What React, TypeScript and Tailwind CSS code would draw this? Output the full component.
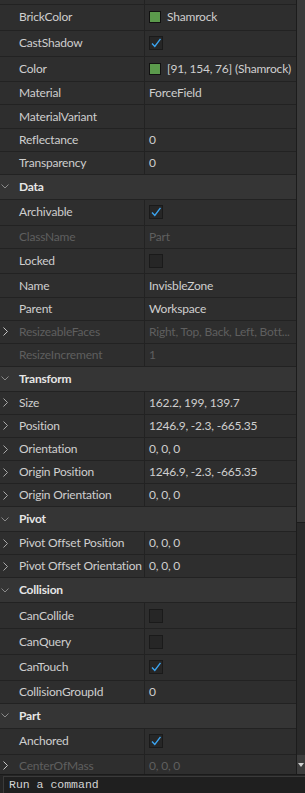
import React from 'react';

type Row =
  | { kind: 'header'; label: string }
  | {
      kind: 'prop';
      name: string;
      value?: string;
      check?: boolean;
      swatch?: boolean;
      expand?: boolean;
      disabled?: boolean;
    };

const rows: Row[] = [
  { kind: 'prop', name: 'BrickColor', value: 'Shamrock', swatch: true },
  { kind: 'prop', name: 'CastShadow', check: true },
  { kind: 'prop', name: 'Color', value: '[91, 154, 76] (Shamrock)', swatch: true },
  { kind: 'prop', name: 'Material', value: 'ForceField' },
  { kind: 'prop', name: 'MaterialVariant', value: '' },
  { kind: 'prop', name: 'Reflectance', value: '0' },
  { kind: 'prop', name: 'Transparency', value: '0' },
  { kind: 'header', label: 'Data' },
  { kind: 'prop', name: 'Archivable', check: true },
  { kind: 'prop', name: 'ClassName', value: 'Part', disabled: true },
  { kind: 'prop', name: 'Locked', check: false },
  { kind: 'prop', name: 'Name', value: 'InvisbleZone' },
  { kind: 'prop', name: 'Parent', value: 'Workspace' },
  { kind: 'prop', name: 'ResizeableFaces', value: 'Right, Top, Back, Left, Bott...', expand: true, disabled: true },
  { kind: 'prop', name: 'ResizeIncrement', value: '1', disabled: true },
  { kind: 'header', label: 'Transform' },
  { kind: 'prop', name: 'Size', value: '162.2, 199, 139.7', expand: true },
  { kind: 'prop', name: 'Position', value: '1246.9, -2.3, -665.35', expand: true },
  { kind: 'prop', name: 'Orientation', value: '0, 0, 0', expand: true },
  { kind: 'prop', name: 'Origin Position', value: '1246.9, -2.3, -665.35', expand: true },
  { kind: 'prop', name: 'Origin Orientation', value: '0, 0, 0', expand: true },
  { kind: 'header', label: 'Pivot' },
  { kind: 'prop', name: 'Pivot Offset Position', value: '0, 0, 0', expand: true },
  { kind: 'prop', name: 'Pivot Offset Orientation', value: '0, 0, 0', expand: true },
  { kind: 'header', label: 'Collision' },
  { kind: 'prop', name: 'CanCollide', check: false },
  { kind: 'prop', name: 'CanQuery', check: false },
  { kind: 'prop', name: 'CanTouch', check: true },
  { kind: 'prop', name: 'CollisionGroupId', value: '0' },
  { kind: 'header', label: 'Part' },
  { kind: 'prop', name: 'Anchored', check: true },
  { kind: 'prop', name: 'CenterOfMass', value: '0, 0, 0', expand: true, disabled: true },
];

function Checkbox({ on }: { on: boolean }) {
  return (
    <div className="w-[14px] h-[14px] border border-[#1a1a1a] bg-[#262626] flex items-center justify-center">
      {on && (
        <svg width="12" height="12" viewBox="0 0 12 12">
          <polyline points="2,6.5 4.8,9.5 10.5,1.8" fill="none" stroke="#3ba4f0" strokeWidth="1.4" />
        </svg>
      )}
    </div>
  );
}

export default function App() {
  return (
    <div className="w-[305px] h-[793px] flex flex-col bg-[#2e2e2e] overflow-hidden font-['Lato','Liberation_Sans',sans-serif] text-[12px] tracking-[-0.2px] text-[#cfcfcf]">
      <div className="flex-1 flex min-h-0">
        {/* property grid */}
        <div className="flex-1 flex flex-col overflow-hidden">
          <div className="h-[5px] shrink-0 flex border-b border-[#222222]">
            <div className="w-[145px] border-r border-[#222222]" />
          </div>
          {rows.map((r, i) =>
            r.kind === 'header' ? (
              <div key={i} className="h-[25px] shrink-0 flex items-center bg-[#353535] border-b border-[#222222]">
                <div className="w-[19px] flex pl-[1px]">
                  <svg width="8" height="5" viewBox="0 0 8 5">
                    <polyline points="0.5,0.5 4,4 7.5,0.5" fill="none" stroke="#8a8a8a" strokeWidth="1" />
                  </svg>
                </div>
                <span className="font-bold text-[#e6e6e6]">{r.label}</span>
              </div>
            ) : (
              <div
                key={i}
                className={`${r.check !== undefined || r.swatch ? 'h-[25.8px]' : 'h-[23.1px]'} shrink-0 flex border-b border-[#222222]`}
              >
                <div className="w-[145px] shrink-0 flex items-center border-r border-[#222222]">
                  <div className="w-[19px] flex pl-[3px]">
                    {r.expand && (
                      <svg width="5" height="9" viewBox="0 0 5 9">
                        <polyline points="0.5,0.5 4.5,4.5 0.5,8.5" fill="none" stroke={r.disabled ? '#c4c4c4' : '#a8a8a8'} strokeWidth="1" />
                      </svg>
                    )}
                  </div>
                  <span className={`whitespace-nowrap ${r.disabled ? 'text-[#5f5f5f]' : ''}`}>{r.name}</span>
                </div>
                <div className="flex-1 flex items-center pl-[4px] min-w-0">
                  {r.check !== undefined && <Checkbox on={r.check} />}
                  {r.swatch && <div className="w-[12px] h-[12px] border border-[#111111] bg-[#5b9a4c] mr-[6px] shrink-0" />}
                  {r.value !== undefined && (
                    <span className={`whitespace-nowrap ${r.disabled ? 'text-[#5f5f5f]' : ''}`}>{r.value}</span>
                  )}
                </div>
              </div>
            )
          )}
        </div>
        {/* scrollbar */}
        <div className="w-[9px] shrink-0 flex flex-col border-l border-[#1c1c1c] bg-[#2a2a2a]">
          <div className="h-[523px] bg-[#3a3a3a] border-b border-[#1c1c1c]" />
          <div className="flex-1" />
          <div className="h-[19px] bg-[#3c3c3c] flex items-center justify-center">
            <svg width="6" height="4" viewBox="0 0 6 4">
              <polygon points="0,0 6,0 3,4" fill="#cfcfcf" />
            </svg>
          </div>
        </div>
      </div>
      {/* command bar */}
      <div className="h-[19px] shrink-0 bg-[#242424] border-t border-[#1a1a1a] pl-[3px] pt-[1px]">
        <div className="h-full border-l border-t border-[#3a3a3a] bg-[#1f1f1f] pl-[5px] flex items-center font-['Liberation_Mono',monospace] text-[11.5px] tracking-normal text-[#d4d4d4]">
          Run a command
        </div>
      </div>
    </div>
  );
}
